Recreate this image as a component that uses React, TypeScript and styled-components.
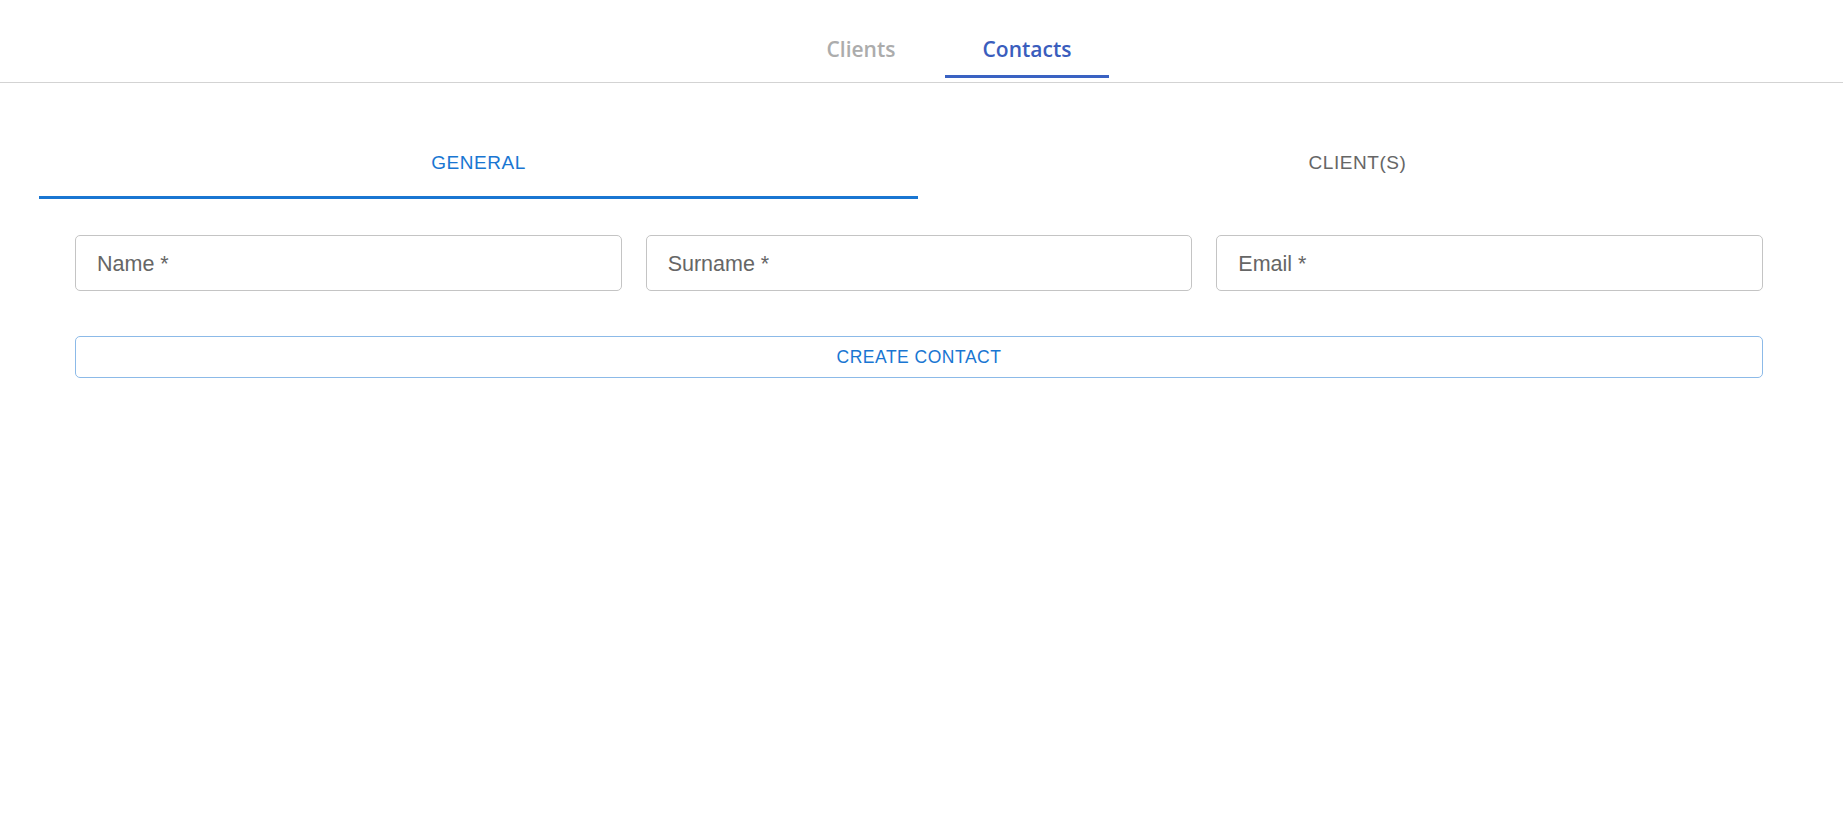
import styled, { createGlobalStyle } from 'styled-components';

const GlobalStyle = createGlobalStyle`
  * {
    box-sizing: border-box;
  }
  body {
    margin: 0;
    background: #ffffff;
    font-family: 'Liberation Sans', Arial, sans-serif;
  }
`;

const Header = styled.header`
  display: flex;
  justify-content: center;
  gap: 2px;
  padding: 0 0 4px 45px;
  border-bottom: 1px solid #d3d3d3;
`;

const NavTab = styled.div<{ active?: boolean }>`
  width: 164px;
  padding: 35px 0 12px;
  text-align: center;
  font-family: 'Open Sans', 'Noto Sans', sans-serif;
  font-size: 21px;
  font-weight: 600;
  line-height: 28px;
  color: ${(props) => (props.active ? '#3a5dbd' : '#acacac')};
  border-bottom: 3px solid ${(props) => (props.active ? '#3a62c2' : 'transparent')};
  cursor: pointer;
`;

const Main = styled.main`
  padding: 45px 46px 0 39px;
`;

const Tabs = styled.div`
  display: grid;
  grid-template-columns: 1fr 1fr;
`;

const Tab = styled.div<{ active?: boolean }>`
  padding: 24px 16px 22px;
  text-align: center;
  font-size: 19px;
  line-height: 22px;
  letter-spacing: 0.54px;
  text-transform: uppercase;
  color: ${(props) => (props.active ? '#1976d2' : '#666666')};
  border-bottom: 3px solid ${(props) => (props.active ? '#1976d2' : 'transparent')};
  cursor: pointer;
`;

const Form = styled.form`
  display: flex;
  flex-direction: column;
  gap: 45px;
  padding: 36px 34px 0 36px;
`;

const Row = styled.div`
  display: grid;
  grid-template-columns: repeat(3, 1fr);
  gap: 24px;
`;

const Input = styled.input`
  height: 56px;
  width: 100%;
  padding: 3px 21px 0;
  border: 1px solid #c4c4c4;
  border-radius: 5px;
  font-family: 'Liberation Sans', Arial, sans-serif;
  font-size: 21.5px;
  color: #333333;
  outline: none;

  &::placeholder {
    color: #666666;
  }
`;

const Button = styled.button`
  height: 42px;
  width: 100%;
  border: 1px solid #8cbae8;
  border-radius: 5px;
  background: transparent;
  font-family: 'Liberation Sans', Arial, sans-serif;
  font-size: 17.5px;
  letter-spacing: 0.5px;
  text-transform: uppercase;
  color: #1976d2;
  cursor: pointer;
`;

function App() {
  return (
    <>
      <GlobalStyle />
      <Header>
        <NavTab>Clients</NavTab>
        <NavTab active>Contacts</NavTab>
      </Header>
      <Main>
        <Tabs>
          <Tab active>General</Tab>
          <Tab>Client(s)</Tab>
        </Tabs>
        <Form onSubmit={(e) => e.preventDefault()}>
          <Row>
            <Input placeholder="Name *" />
            <Input placeholder="Surname *" />
            <Input placeholder="Email *" />
          </Row>
          <Button type="submit">Create contact</Button>
        </Form>
      </Main>
    </>
  );
}

export default App;
